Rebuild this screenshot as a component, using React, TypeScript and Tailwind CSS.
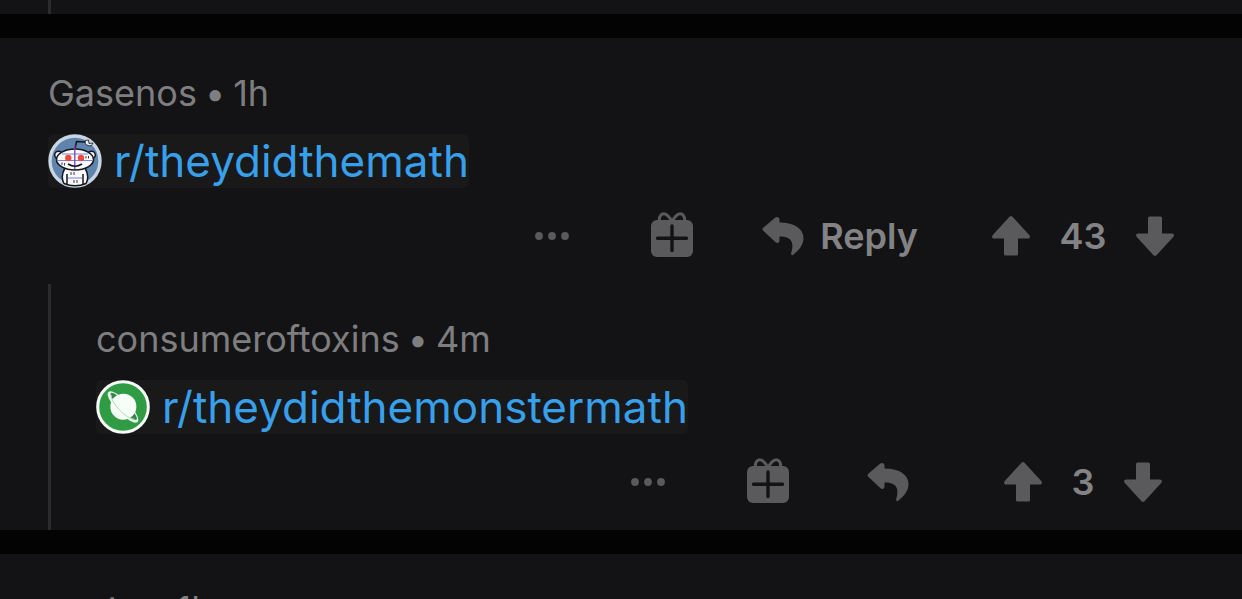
import type { ReactNode } from 'react';
import clsx from 'clsx';

type CommentProps = {
  author: string;
  age: string;
  subreddit?: string;
  avatar?: ReactNode;
  score?: number;
  replyLabel?: boolean;
};

function SnooAvatar() {
  return (
    <svg viewBox="0 0 54 54" className="size-[54px] shrink-0" aria-hidden="true">
      <circle cx="27" cy="27" r="25" fill="#5f84ae" stroke="#c9d5e2" strokeWidth="3.4" />
      <path d="M26.800 16 L28.500 7.500 L37 8" fill="none" stroke="#15161c" strokeWidth="1.500" />
      <path d="M37.500 6.500 A3.800 3.800 0 1 0 45 9 L41 9.500 L40.500 6 Z" fill="#e9eef5" stroke="#15161c" strokeWidth=".8" />
      <circle cx="10.500" cy="21" r="3.800" fill="#f4f5fa" stroke="#15161c" strokeWidth="1.500" />
      <circle cx="43.500" cy="21" r="3.800" fill="#f4f5fa" stroke="#15161c" strokeWidth="1.500" />
      <path d="M17 34 C13.500 40 13.500 45 16 49.500 Q27 54 38 49.500 C40.500 45 40.500 40 37 34 Z" fill="#fafafd" stroke="#15161c" strokeWidth="1.500" />
      <path d="M19 40 V50 M35 40 V50" stroke="#15161c" strokeWidth="1.500" />
      <ellipse cx="27" cy="25.500" rx="18.500" ry="10.500" fill="#fafafd" stroke="#15161c" strokeWidth="1.600" />
      <path d="M9.500 26.500 H44.500 M14 20 H40 M20 44 H34" stroke="#7c80d6" strokeWidth="1" />
      <path d="M26.800 11 V35" stroke="#7b3fae" strokeWidth="1.300" />
      <circle cx="20.300" cy="24" r="3.200" fill="#ee4b3c" />
      <circle cx="33" cy="24" r="3.200" fill="#ee4b3c" />
      <path d="M20 30 Q27 34.500 34 30" fill="none" stroke="#15161c" strokeWidth="1.500" />
      <path d="M14 28.500 v2.500 M16.500 29 v2.500 M38 22 v2.500 M40.500 22 v2.500 M23 38 v3 M26 38 v3 M29 46 v3 M26 46 v3" stroke="#3b3c4a" strokeWidth="1" />
    </svg>
  );
}

function PlanetAvatar() {
  return (
    <svg viewBox="0 0 54 54" className="size-[54px] shrink-0" aria-hidden="true">
      <circle cx="27" cy="27" r="25.300" fill="#2f9c45" stroke="#f6fbf6" strokeWidth="3" />
      <g transform="rotate(46 27 27)">
        <ellipse cx="27" cy="27" rx="21" ry="6.500" fill="#e6f7e9" />
        <ellipse cx="27" cy="26" rx="18.500" ry="4" fill="#39844a" />
        <circle cx="27" cy="26.500" r="13" fill="#f6fff7" />
        <path d="M10 27 C15 33 39 33 44 27" fill="none" stroke="#a9d6b2" strokeWidth=".9" />
      </g>
    </svg>
  );
}

function DotsIcon() {
  return (
    <svg viewBox="0 0 36 8" className="h-2 w-9" fill="currentColor" aria-hidden="true">
      <circle cx="5" cy="4" r="3.900" />
      <circle cx="18" cy="4" r="3.900" />
      <circle cx="31" cy="4" r="3.900" />
    </svg>
  );
}

function GiftIcon() {
  return (
    <svg viewBox="0 0 42 48" className="h-12 w-[42px]" fill="none" aria-hidden="true">
      <rect y="8" width="42" height="37" rx="6" fill="currentColor" />
      <path
        d="M8.500 10 C7.500 4 11 .8 14.500 2.200 C17.500 3.500 19 6.500 21 9.500 C23 6.500 24.500 3.500 27.500 2.200 C31 .8 34.500 4 33.500 10"
        stroke="currentColor"
        strokeWidth="3"
      />
      <path d="M21 14 V38.500 M6.500 26.300 H35.500" stroke="#131315" strokeWidth="3.400" strokeLinecap="round" />
    </svg>
  );
}

function ReplyIcon() {
  return (
    <svg viewBox="0 0 42 40" className="h-10 w-[42px] shrink-0" fill="currentColor" aria-hidden="true">
      <path d="M1 12 L13 1.700 C15 .2 17.500 1.200 17.500 3.500 V6.500 C33 6.500 41.500 13 41.500 22 C41.500 29 37 34 31.500 38.600 C30 39.700 28.800 39 29.200 37.300 C32 28 31 20.500 17.500 20.500 V24.500 C17.500 27 15 27.600 13.300 26 L1 14.500 Q0 13.300 1 12 Z" />
    </svg>
  );
}

function VoteIcon({ down = false }: { down?: boolean }) {
  return (
    <svg viewBox="0 0 38 40" className={clsx('h-10 w-[38px]', down && 'rotate-180')} fill="currentColor" aria-hidden="true">
      <path d="M17.500 .7 Q19 -.6 20.500 .7 L37.200 19 C38.700 20.800 37.800 22.600 35.800 22.600 H26 V38 Q26 39.500 24.500 39.500 H13.500 Q12 39.500 12 38 V22.600 H2.200 C.2 22.600 -.7 20.800 .8 19 Z" />
    </svg>
  );
}

function Actions({ score, replyLabel }: { score: number; replyLabel?: boolean }) {
  return (
    <div className="flex h-24 items-center justify-end pr-6 text-[#5a5a5c]">
      <button type="button" aria-label="More options" className="flex w-30 justify-center">
        <DotsIcon />
      </button>
      <button type="button" aria-label="Give award" className="flex w-30 justify-center">
        <GiftIcon />
      </button>
      <button
        type="button"
        aria-label="Reply"
        className={clsx('flex items-center justify-center gap-4', replyLabel ? 'w-54' : 'w-30')}
      >
        <ReplyIcon />
        {replyLabel && <span className="text-4xl font-semibold text-[#838385]">Reply</span>}
      </button>
      <div className="flex w-[270px] items-center justify-center gap-[30px]">
        <button type="button" aria-label="Upvote">
          <VoteIcon />
        </button>
        <span className="text-4xl font-semibold text-[#838385]">{score}</span>
        <button type="button" aria-label="Downvote">
          <VoteIcon down />
        </button>
      </div>
    </div>
  );
}

function Comment({ author, age, subreddit, avatar, score, replyLabel }: CommentProps) {
  return (
    <article className="pt-8">
      <p className="flex gap-2 text-[36px] leading-[46px] text-[#7e7e80]">
        <span>{author}</span>
        <span>•</span>
        <span>{age}</span>
      </p>
      {subreddit && (
        <a
          href={`https://www.reddit.com/${subreddit}`}
          className="mt-[18px] flex h-[54px] w-fit items-center gap-3 rounded-md bg-[#19191a] text-[44px] text-[#389fea]"
        >
          {avatar}
          <span>{subreddit}</span>
        </a>
      )}
      {score !== undefined && <Actions score={score} replyLabel={replyLabel} />}
    </article>
  );
}

export default function App() {
  return (
    <main className="flex h-screen flex-col gap-6 overflow-hidden bg-[#030303] font-['Inter',sans-serif]">
      <div className="h-3.5 shrink-0 bg-[#131315] pl-12">
        <div className="h-full border-l-3 border-[#2b2b2d]" />
      </div>

      <section className="shrink-0 bg-[#131315] pl-12">
        <Comment
          author="Gasenos"
          age="1h"
          subreddit="r/theydidthemath"
          avatar={<SnooAvatar />}
          score={43}
          replyLabel
        />
        <div className="border-l-3 border-[#2b2b2d] pl-[45px]">
          <Comment
            author="consumeroftoxins"
            age="4m"
            subreddit="r/theydidthemonstermath"
            avatar={<PlanetAvatar />}
            score={3}
          />
        </div>
      </section>

      <section className="grow bg-[#131315] pl-12">
        <Comment author="zesto" age="1h" />
      </section>
    </main>
  );
}
